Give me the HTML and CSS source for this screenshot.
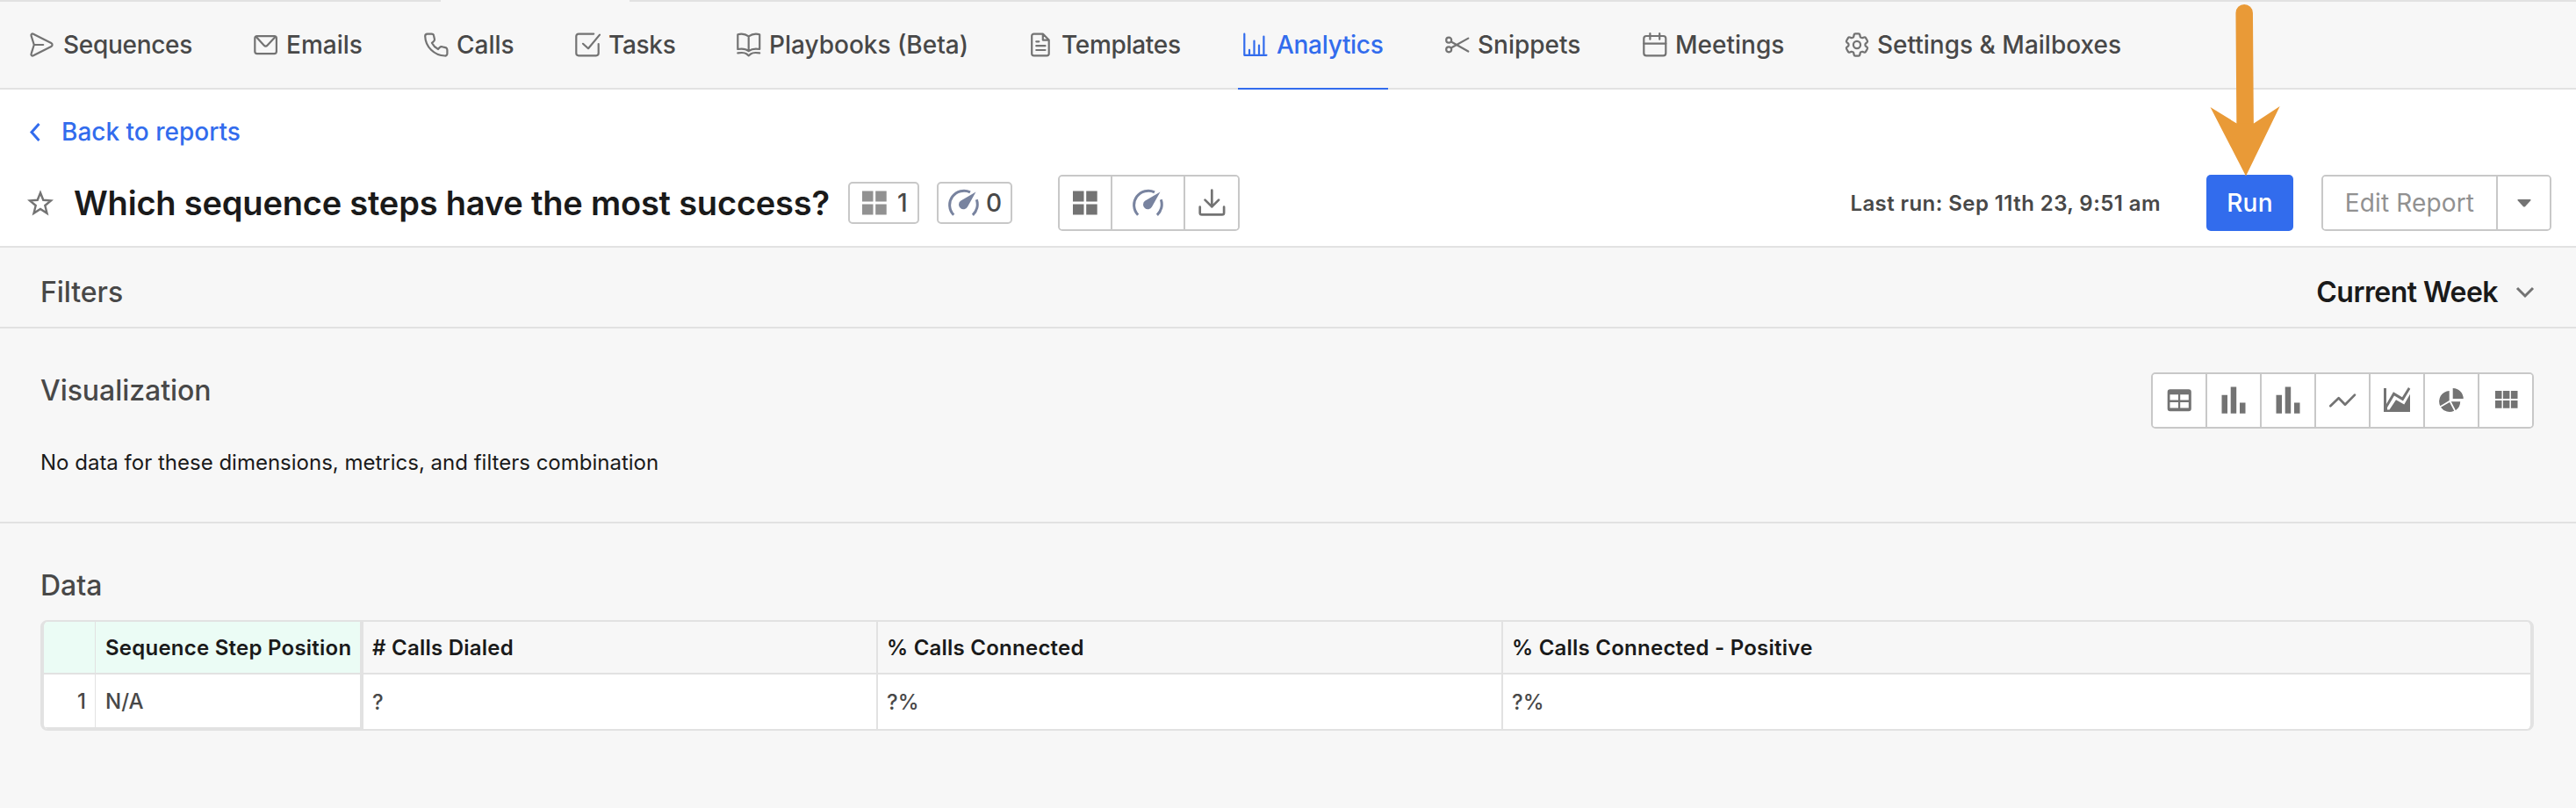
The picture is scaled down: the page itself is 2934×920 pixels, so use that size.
FILE: index.html
```html
<!DOCTYPE html>
<html lang="en">
<head>
    <meta charset="UTF-8">
    <meta name="viewport" content="width=device-width, initial-scale=1.0">
    <title>Which sequence steps have the most success?</title>
    <link rel="stylesheet" href="styles.css">
</head>
<body>
    <nav class="main-nav">
        <a class="nav-item" href="#">
            <svg class="nav-icon" viewBox="0 0 28 28"><path d="M1.6 3.9C1 2.2 2.4 1 4 1.7L24.3 12c1.7.9 1.7 3.1 0 4L4 26.3c-1.6.7-3-.5-2.4-2.2L4.8 14ZM5 14h10.2"/></svg>
            <span class="tight">Sequences</span>
        </a>
        <a class="nav-item" href="#">
            <svg class="nav-icon" viewBox="0 0 28 28"><rect x="1.3" y="4.2" width="24.6" height="20" rx="2.6"/><path d="M2.8 5l9 9.8c1 1.1 2.6 1.1 3.6 0L24.5 5"/></svg>
            <span>Emails</span>
        </a>
        <a class="nav-item" href="#">
            <svg class="nav-icon" viewBox="0 0 28 28"><path d="M1.2 4.2C1.2 2.6 2.2 1.6 3.7 1.6H8.6C10 1.6 10.9 2.4 11.1 3.7L11.9 7.4C12.1 8.6 11.7 9.5 10.8 10.2L9 11.9C10.6 15 13 17.4 16 19L17.8 17C18.5 16.3 19.4 16 20.4 16.2L24.2 17.1C25.5 17.4 26.4 18.3 26.4 19.7V24C26.4 25.6 25.2 26.7 23.6 26.5C11.6 26 1.6 16.4 1.2 4.2Z"/></svg>
            <span>Calls</span>
        </a>
        <a class="nav-item" href="#">
            <svg class="nav-icon" viewBox="0 0 28 28"><path d="M21.2 1.6H4C2.4 1.6 1.3 2.7 1.3 4.2V23.6C1.3 25.2 2.4 26.3 4 26.3H24C25.6 26.3 26.7 25.2 26.7 23.6V13M9 12.8L15 18.2L28 2.6"/></svg>
            <span class="tight">Tasks</span>
        </a>
        <a class="nav-item" href="#">
            <svg class="nav-icon" viewBox="0 0 28 28"><path d="M1.3 2.2C5.5 1 10.5 2 13.7 4.4C17 2 22 1 26.2 2.2V19C22 18.2 17 18.6 13.7 21.2C10.5 18.6 5.5 18.2 1.3 19ZM13.7 4.4V20.5M1.3 23.4C5 22.8 9.5 22.9 11.3 24.4L13.7 26.4L16.2 24.4C18 22.9 22.5 22.8 26.2 23.4"/></svg>
            <span>Playbooks (Beta)</span>
        </a>
        <a class="nav-item" href="#">
            <svg class="nav-icon" viewBox="0 0 28 28"><path d="M16.8 1.6H6.5C5.2 1.6 4.2 2.6 4.2 4V24C4.2 25.3 5.2 26.3 6.5 26.3H21.3C22.7 26.3 23.7 25.3 23.7 24V8.6ZM16.8 1.6V8.6H23.7M9.3 10.3H12.3M9.3 15.2H19.5M9.3 20H19.5"/></svg>
            <span class="tight">Templates</span>
        </a>
        <a class="nav-item active" href="#">
            <svg class="nav-icon" viewBox="0 0 28 28"><path d="M1.3 1.7V25.8H26.5M7 24V19.8M12.5 24V9.5M18 24V14.7M23.4 24V4.5"/></svg>
            <span class="tight">Analytics</span>
        </a>
        <a class="nav-item" href="#">
            <svg class="nav-icon" viewBox="0 0 28 28"><circle cx="4.2" cy="8.7" r="3"/><circle cx="4.2" cy="19.3" r="3"/><path d="M6.8 10.5L26.3 21.5M6.8 17.5L26.3 6.6"/></svg>
            <span>Snippets</span>
        </a>
        <a class="nav-item" href="#">
            <svg class="nav-icon" viewBox="0 0 28 28"><rect x="1.3" y="4" width="25" height="22.4" rx="2.8"/><path d="M1.3 12.6H26.3M8.4 1V7.7M19.2 1V7.7"/></svg>
            <span>Meetings</span>
        </a>
        <a class="nav-item" href="#">
            <svg class="nav-icon gear" viewBox="2 2 20 20"><path d="M9.594 3.94c.09-.542.56-.94 1.11-.94h2.593c.55 0 1.02.398 1.11.94l.213 1.281c.063.374.313.686.645.87.074.04.147.083.22.127.325.196.72.257 1.075.124l1.217-.456a1.125 1.125 0 0 1 1.37.49l1.296 2.247a1.125 1.125 0 0 1-.26 1.431l-1.003.827c-.293.241-.438.613-.43.992a7.723 7.723 0 0 1 0 .255c-.008.378.137.75.43.991l1.004.827c.424.35.534.955.26 1.43l-1.298 2.247a1.125 1.125 0 0 1-1.369.491l-1.217-.456c-.355-.133-.75-.072-1.076.124a6.47 6.47 0 0 1-.22.128c-.331.183-.581.495-.644.869l-.213 1.281c-.09.543-.56.94-1.11.94h-2.594c-.55 0-1.019-.398-1.11-.94l-.213-1.281c-.062-.374-.312-.686-.644-.87a6.52 6.52 0 0 1-.22-.127c-.325-.196-.72-.257-1.076-.124l-1.217.456a1.125 1.125 0 0 1-1.369-.49l-1.297-2.247a1.125 1.125 0 0 1 .26-1.431l1.004-.827c.292-.24.437-.613.43-.991a6.932 6.932 0 0 1 0-.255c.007-.38-.138-.751-.43-.992l-1.004-.827a1.125 1.125 0 0 1-.26-1.43l1.297-2.247a1.125 1.125 0 0 1 1.37-.491l1.216.456c.356.133.751.072 1.076-.124.072-.044.146-.086.22-.128.332-.183.582-.495.644-.869l.214-1.28Z"/><circle cx="12" cy="12" r="2.9"/></svg>
            <span>Settings &amp; Mailboxes</span>
        </a>
    </nav>

    <header class="report-header">
        <a class="back-link" href="#">
            <svg width="14" height="24" viewBox="0 0 14 24"><path d="M12.5 2L4 11.5l8.5 9.5"/></svg>
            <span>Back to reports</span>
        </a>
        <div class="title-row">
            <svg class="star" width="30" height="30" viewBox="0 0 30 30"><path d="M15 3.5L18.3 11.8L27 12.4L20.3 18L22.5 26.8L15 22L7.5 26.8L9.7 18L3 12.4L11.7 11.8Z"/></svg>
            <h1>Which sequence steps have the most success?</h1>
            <div class="badge dashboards">
                <svg class="fill-light" width="28" height="28" viewBox="0 0 28 28"><path d="M0 .5h12.5v12H0zM15.2.5h12.5v12H15.2zM0 15.5h12.5v12H0zM15.2 15.5h12.5v12H15.2z"/></svg>
                <span>1</span>
            </div>
            <div class="badge goals">
                <svg class="gauge" width="36" height="32" viewBox="-18 -18 36 32"><path class="arc" d="M-10.8 11.8A16.3 16.3 0 0 1 8-14.2M15.3-5.8A16.3 16.3 0 0 1 10.9 11.8"/><path class="needle" d="M14.5-14.5L5 2.4A5.3 5.3 0 1 1-3-4.2Z"/></svg>
                <span>0</span>
            </div>
            <div class="button-group report-actions">
                <button class="dash-btn"><svg class="fill" width="28" height="28" viewBox="0 0 28 28"><path d="M0 .5h12.5v12H0zM15.2.5h12.5v12H15.2zM0 15.5h12.5v12H0zM15.2 15.5h12.5v12H15.2z"/></svg></button>
                <button class="goal-btn"><svg class="gauge" width="36" height="32" viewBox="-18 -18 36 32"><path class="arc" d="M-10.8 11.8A16.3 16.3 0 0 1 8-14.2M15.3-5.8A16.3 16.3 0 0 1 10.9 11.8"/><path class="needle" d="M14.5-14.5L5 2.4A5.3 5.3 0 1 1-3-4.2Z"/></svg></button>
                <button class="export-btn"><svg class="stroke" width="60" height="60" viewBox="0 0 60 60"><path d="M30.3 15.7V34.4M22.5 26.6L30.3 34.4L38.1 26.6M16.7 34.7V41.2C16.7 42.5 17.6 43.4 18.9 43.4H41.9C43.2 43.4 44.1 42.5 44.1 41.2V34.7"/></svg></button>
            </div>

            <span class="last-run">Last run: Sep 11th 23, 9:51 am</span>
            <button class="run-btn">Run</button>
            <div class="button-group edit-group">
                <button class="edit-btn">Edit Report</button>
                <button class="caret-btn"><svg class="fill" width="16" height="9" viewBox="0 0 16 9"><path d="M1.3 0H14.7Q16.2.2 15.2 1.5L9 8.2Q8 9 7 8.2L.8 1.5Q-.2.2 1.3 0Z"/></svg></button>
            </div>
        </div>
        <svg class="pointer-arrow" width="80" height="197" viewBox="0 0 80 197"><path class="shaft" d="M39.2 10.7L40.2 150"/><path class="head" d="M.5 118L30.5 136.5H50L79.7 117L41 196.5Z"/></svg>
    </header>

    <section class="filters">
        <h2>Filters</h2>
        <div class="date-range">
            <span>Current Week</span>
            <svg width="22" height="14" viewBox="0 0 22 14"><path d="M2 2L11 11L20 2"/></svg>
        </div>
    </section>

    <section class="visualization">
        <div>
            <h2>Visualization</h2>
            <p>No data for these dimensions, metrics, and filters combination</p>
        </div>
        <div class="button-group chart-types">
            <button><svg class="fill" viewBox="0 0 60 60"><path fill-rule="evenodd" d="M19.7 17.3H40.8Q43.8 17.3 43.8 20.3V39.2Q43.8 42.2 40.8 42.2H19.7Q16.7 42.2 16.7 39.2V20.3Q16.7 17.3 19.7 17.3ZM19.5 23.3V29.4H29V23.3ZM31.2 23.3V29.4H40.8V23.3ZM19.5 32V38.5H29V32ZM31.2 32V38.5H40.8V32Z"/></svg></button>
            <button><svg class="fill" viewBox="0 0 60 60"><path d="M16.5 23.7H23V44.7H16.5zM26.7 14.5H33.2V44.7H26.7zM37 32.5H43.5V44.7H37z"/></svg></button>
            <button><svg class="fill" viewBox="0 0 60 60"><path d="M16.5 23.7H23V44.7H16.5zM26.7 14.5H33.2V44.7H26.7zM37 32.5H43.5V44.7H37z"/></svg></button>
            <button><svg class="stroke" viewBox="0 0 60 60"><path d="M16.3 36.3L25.7 27.2L33 34.7L44 23.6"/></svg></button>
            <button><svg class="fill" viewBox="0 0 60 60"><path d="M15 16H18V34L26 20.3L36 26.3L43 15L45.3 16.7L37 30.5L27 24.5L19 38V40.5H21.5L29 29.3L38.3 34.6L45 22.8V43H15Z"/></svg></button>
            <button><svg class="fill" viewBox="0 0 60 60"><path d="M27.7 30V19A12 12 0 0 0 17.3 36.2ZM28 31.9L18 37.8A12 12 0 0 0 33.2 41.7ZM29.8 31.2H40.2A12 12 0 0 1 34.9 41.2ZM31.7 28V16A12 12 0 0 1 43.7 28Z"/></svg></button>
            <button><svg class="fill" viewBox="0 0 60 60"><path d="M18 19h7.5v9H18zM26.9 19h7.5v9H26.9zM35.9 19h7.6v9H35.9zM18 30h7.5v8.7H18zM26.9 30h7.5v8.7H26.9zM35.9 30h7.6v8.7H35.9z"/></svg></button>
        </div>
    </section>

    <section class="data">
        <h2>Data</h2>
        <div class="data-table">
            <div class="cell head dimension index"></div>
            <div class="cell head dimension frozen">Sequence Step Position</div>
            <div class="cell head"># Calls Dialed</div>
            <div class="cell head">% Calls Connected</div>
            <div class="cell head">% Calls Connected - Positive</div>
            <div class="cell index pinned">1</div>
            <div class="cell frozen pinned">N/A</div>
            <div class="cell">?</div>
            <div class="cell">?%</div>
            <div class="cell">?%</div>
        </div>
    </section>
</body>
</html>
```
FILE: styles.css
```css
:root {
    --blue: #326ced;
    --orange: #e99a37;
    --slate: #78839f;
    --background: #f7f7f7;
    --line: #e2e2e2;
    --button-border: #c8c8c8;
    --icon: #737373;
    --text: #1a1a1a;
    --text-secondary: #484848;
    --text-muted: #919191;
}

* {
    margin: 0;
    padding: 0;
    box-sizing: border-box;
}

body {
    font-family: Inter, "Liberation Sans", sans-serif;
    background-color: var(--background);
    color: var(--text);
    min-height: 100vh;
}

a {
    color: inherit;
    text-decoration: none;
}

svg {
    display: block;
    flex-shrink: 0;
}

/* Navigation */
.main-nav {
    position: relative;
    display: grid;
    grid-template-columns: 255px 194px 172px 184px 332px 245px 230px 225px 230px auto;
    justify-content: start;
    height: 102px;
    padding-left: 28px;
    border-top: 2px solid var(--line);
    border-bottom: 2px solid var(--line);
}

/* opening in the top line under the current app tab */
.main-nav::before {
    content: "";
    position: absolute;
    top: -2px;
    left: 502px;
    width: 215px;
    height: 2px;
    background-color: var(--background);
}

.nav-item {
    display: flex;
    align-items: center;
    justify-self: start;
    gap: 9px;
    height: 100px;
    padding: 0 5px 0 6px;
    border-bottom: 2px solid transparent;
    font-size: 28px;
    font-weight: 500;
    color: var(--text-secondary);
    white-space: nowrap;
}

.nav-item .tight {
    margin-left: 1px;
    letter-spacing: -0.3px;
}

.nav-icon {
    width: 28px;
    height: 28px;
    fill: none;
    stroke: var(--icon);
    stroke-width: 2.2;
    stroke-linejoin: round;
    stroke-linecap: round;
    overflow: visible;
}

.nav-icon.gear {
    stroke-width: 1.6;
}

.nav-item.active {
    color: var(--blue);
    border-bottom-color: var(--blue);
}

.nav-item.active .nav-icon {
    stroke: var(--blue);
}

/* Report header */
.report-header {
    position: relative;
    height: 180px;
    padding: 0 28px 0 31px;
    background-color: #ffffff;
    border-bottom: 2px solid var(--line);
}

.back-link {
    display: flex;
    align-items: center;
    gap: 24px;
    height: 97px;
    padding-left: 1px;
    font-size: 28px;
    font-weight: 500;
    color: var(--blue);
}

.back-link span {
    padding-bottom: 1px;
}

.back-link svg {
    fill: none;
    stroke: var(--blue);
    stroke-width: 3;
}

.title-row {
    display: flex;
    align-items: center;
    height: 64px;
}

.star {
    fill: none;
    stroke: var(--icon);
    stroke-width: 2.4;
}

h1 {
    margin-left: 23px;
    font-size: 38px;
    font-weight: 600;
    letter-spacing: -0.19px;
    white-space: nowrap;
}

.badge {
    display: flex;
    align-items: center;
    height: 48px;
    border: 2px solid var(--button-border);
    border-radius: 5px;
    font-size: 28px;
    font-weight: 500;
    color: var(--text-secondary);
}

.badge.dashboards {
    width: 81px;
    margin-left: 21px;
    padding-left: 14px;
    gap: 12px;
}

.badge.goals {
    width: 86px;
    margin-left: 20px;
    padding-left: 10px;
    gap: 8px;
}

.fill {
    fill: var(--icon);
}

.fill-light {
    fill: var(--text-muted);
}

.stroke {
    fill: none;
    stroke: var(--icon);
    stroke-width: 2.7;
    stroke-linecap: round;
    stroke-linejoin: round;
}

.gauge .arc {
    fill: none;
    stroke: var(--slate);
    stroke-width: 3;
}

.gauge .needle {
    fill: var(--slate);
}

button {
    display: flex;
    align-items: center;
    justify-content: center;
    border: none;
    background-color: #ffffff;
    font-family: inherit;
    font-size: 28px;
    font-weight: 500;
    cursor: pointer;
}

.button-group {
    display: flex;
    height: 64px;
    border: 2px solid var(--button-border);
    border-radius: 5px;
    overflow: hidden;
}

.button-group button + button {
    border-left: 2px solid var(--button-border);
}

.report-actions {
    margin-left: 52px;
}

.dash-btn {
    width: 58px;
}

.goal-btn {
    width: 83px;
}

.export-btn {
    width: 62px;
}

.last-run {
    margin-left: auto;
    font-size: 24px;
    font-weight: 600;
    letter-spacing: 0.42px;
    color: var(--text-secondary);
}

.run-btn {
    width: 99px;
    height: 64px;
    margin-left: 52px;
    border-radius: 5px;
    background-color: var(--blue);
    color: #ffffff;
    letter-spacing: 0.3px;
}

.edit-group {
    width: 262px;
    margin-left: 32px;
}

.edit-btn {
    width: 197px;
    font-weight: 400;
    letter-spacing: 0.14px;
    color: var(--text-muted);
}

.caret-btn {
    flex: 1;
}

.pointer-arrow {
    position: absolute;
    top: -98px;
    left: 2517px;
}

.pointer-arrow .shaft {
    stroke: var(--orange);
    stroke-width: 19.5;
    stroke-linecap: round;
}

.pointer-arrow .head {
    fill: var(--orange);
}

/* Sections */
h2 {
    font-size: 32px;
    font-weight: 500;
    line-height: 40px;
    letter-spacing: -0.05px;
    color: var(--text-secondary);
}

.filters {
    display: flex;
    align-items: center;
    justify-content: space-between;
    height: 92px;
    padding: 11px 47px 0 46px;
    border-bottom: 2px solid var(--line);
}

.date-range {
    display: flex;
    align-items: center;
    gap: 20px;
    font-size: 32px;
    font-weight: 600;
    letter-spacing: -0.54px;
}

.date-range svg {
    fill: none;
    stroke: var(--icon);
    stroke-width: 3;
}

.visualization {
    display: flex;
    align-items: flex-start;
    justify-content: space-between;
    height: 222px;
    padding: 50px 48px 0 46px;
    border-bottom: 2px solid var(--line);
}

.visualization h2 {
    margin-top: 1px;
}

.visualization p {
    margin-top: 47px;
    font-size: 24px;
    line-height: 30px;
}

.chart-types button {
    width: 62px;
}

.chart-types button:first-child {
    width: 60px;
}

.chart-types svg {
    width: 60px;
    height: 60px;
}

.data {
    padding: 51px 48px 0 46px;
}

.data-table {
    display: grid;
    grid-template-columns: 59px 305px 586px 712px 1fr;
    grid-template-rows: 60px 62px;
    margin-top: 19px;
    border: 2px solid var(--line);
    border-width: 2px 4px;
    border-radius: 8px;
    overflow: hidden;
}

.cell {
    display: flex;
    align-items: center;
    padding: 0 10px;
    border-right: 2px solid var(--line);
    background-color: #ffffff;
    font-size: 24px;
    font-weight: 500;
    color: var(--text-secondary);
    white-space: nowrap;
}

.cell:nth-child(5n) {
    border-right: none;
}

.cell.head {
    border-bottom: 2px solid var(--line);
    background-color: var(--background);
    font-weight: 600;
    letter-spacing: 0.24px;
    color: var(--text);
}

.cell.head.dimension {
    background-color: #ebfcf5;
}

.cell.index {
    justify-content: flex-end;
    border-right-width: 1px;
}

.cell.frozen {
    padding: 0 0 0 11px;
    border-right-width: 4px;
}

.cell.pinned {
    border-bottom: 2px solid var(--line);
}
```
